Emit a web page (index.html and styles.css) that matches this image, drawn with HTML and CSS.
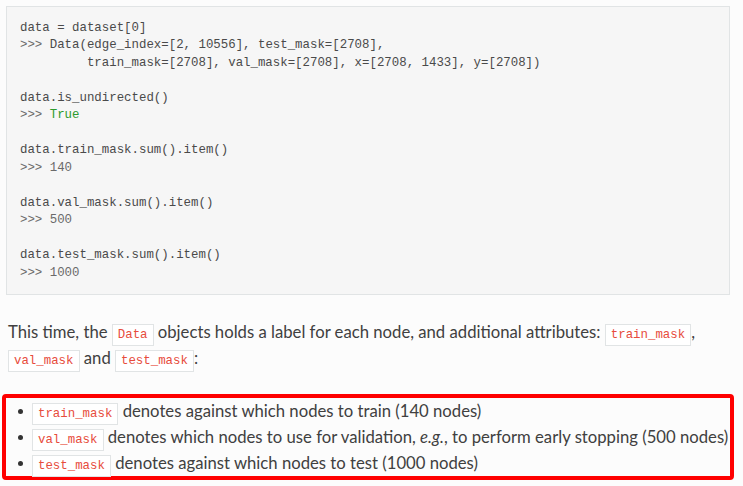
FILE: index.html
```html
<!DOCTYPE html>
<html>
<head>
<meta charset="utf-8">
<link rel="stylesheet" href="styles.css">
</head>
<body>
<div class="page">
  <div class="highlight"><pre><span class="n">data = dataset[0]</span>
<span class="gp">&gt;&gt;&gt;</span> <span class="n">Data(edge_index=[2, 10556], test_mask=[2708],</span>
<span class="n">         train_mask=[2708], val_mask=[2708], x=[2708, 1433], y=[2708])</span>

<span class="n">data.is_undirected()</span>
<span class="gp">&gt;&gt;&gt;</span> <span class="kc">True</span>

<span class="n">data.train_mask.sum().item()</span>
<span class="gp">&gt;&gt;&gt; 140</span>

<span class="n">data.val_mask.sum().item()</span>
<span class="gp">&gt;&gt;&gt; 500</span>

<span class="n">data.test_mask.sum().item()</span>
<span class="gp">&gt;&gt;&gt; 1000</span></pre></div>

  <p class="para">This time, the <code class="literal">Data</code> objects holds a label for each node, and additional attributes: <code class="literal">train_mask</code>, <code class="literal">val_mask</code> and <code class="literal">test_mask</code>:</p>

  <div class="marked">
    <ul class="list">
      <li><code class="literal">train_mask</code> denotes against which nodes to train (140 nodes)</li>
      <li><code class="literal">val_mask</code> denotes which nodes to use for validation, <em>e.g.</em>, to perform early stopping (500 nodes)</li>
      <li><code class="literal">test_mask</code> denotes against which nodes to test (1000 nodes)</li>
    </ul>
  </div>
</div>
</body>
</html>
```
FILE: styles.css
```css
html, body {
  margin: 0;
  padding: 0;
  background: #fcfcfc;
}
body {
  font-family: Lato, "Noto Sans", sans-serif;
  color: #404040;
  font-size: 16.7px;
}
.page {
  padding: 6px 13px 0 6px;
}
.highlight {
  background: #f6f6f6;
  border: 1px solid #e1e4e5;
}
.highlight pre {
  margin: 0;
  padding: 12.5px 12.5px 12px 13px;
  font-family: "Liberation Mono", monospace;
  font-size: 12.4px;
  line-height: 17.5px;
  color: #4a4a4a;
}
.gp { color: #6a6a6a; }
.kc { color: #2c9a2c; }
.para {
  margin: 24px 0 23px 2px;
  line-height: 26px;
}
code.literal {
  font-family: "Liberation Mono", monospace;
  font-size: 12.4px;
  line-height: 1;
  color: #e74c3c;
  background: #fff;
  border: 1px solid #e1e4e5;
  padding: 3px 5px;
  white-space: nowrap;
}
.marked {
  margin: 0 0 0 -4px;
  width: 724px;
  border: 4px solid #f00;
  border-radius: 4px;
}
.list {
  margin: 0;
  padding: 0 0 0 12px;
  line-height: 26px;
  list-style: none;
}
.list li {
  margin: 0;
}
.list li::before {
  content: "";
  display: inline-block;
  width: 5px;
  height: 5px;
  border-radius: 50%;
  background: #333;
  margin-right: 9px;
  vertical-align: 3px;
}
```
